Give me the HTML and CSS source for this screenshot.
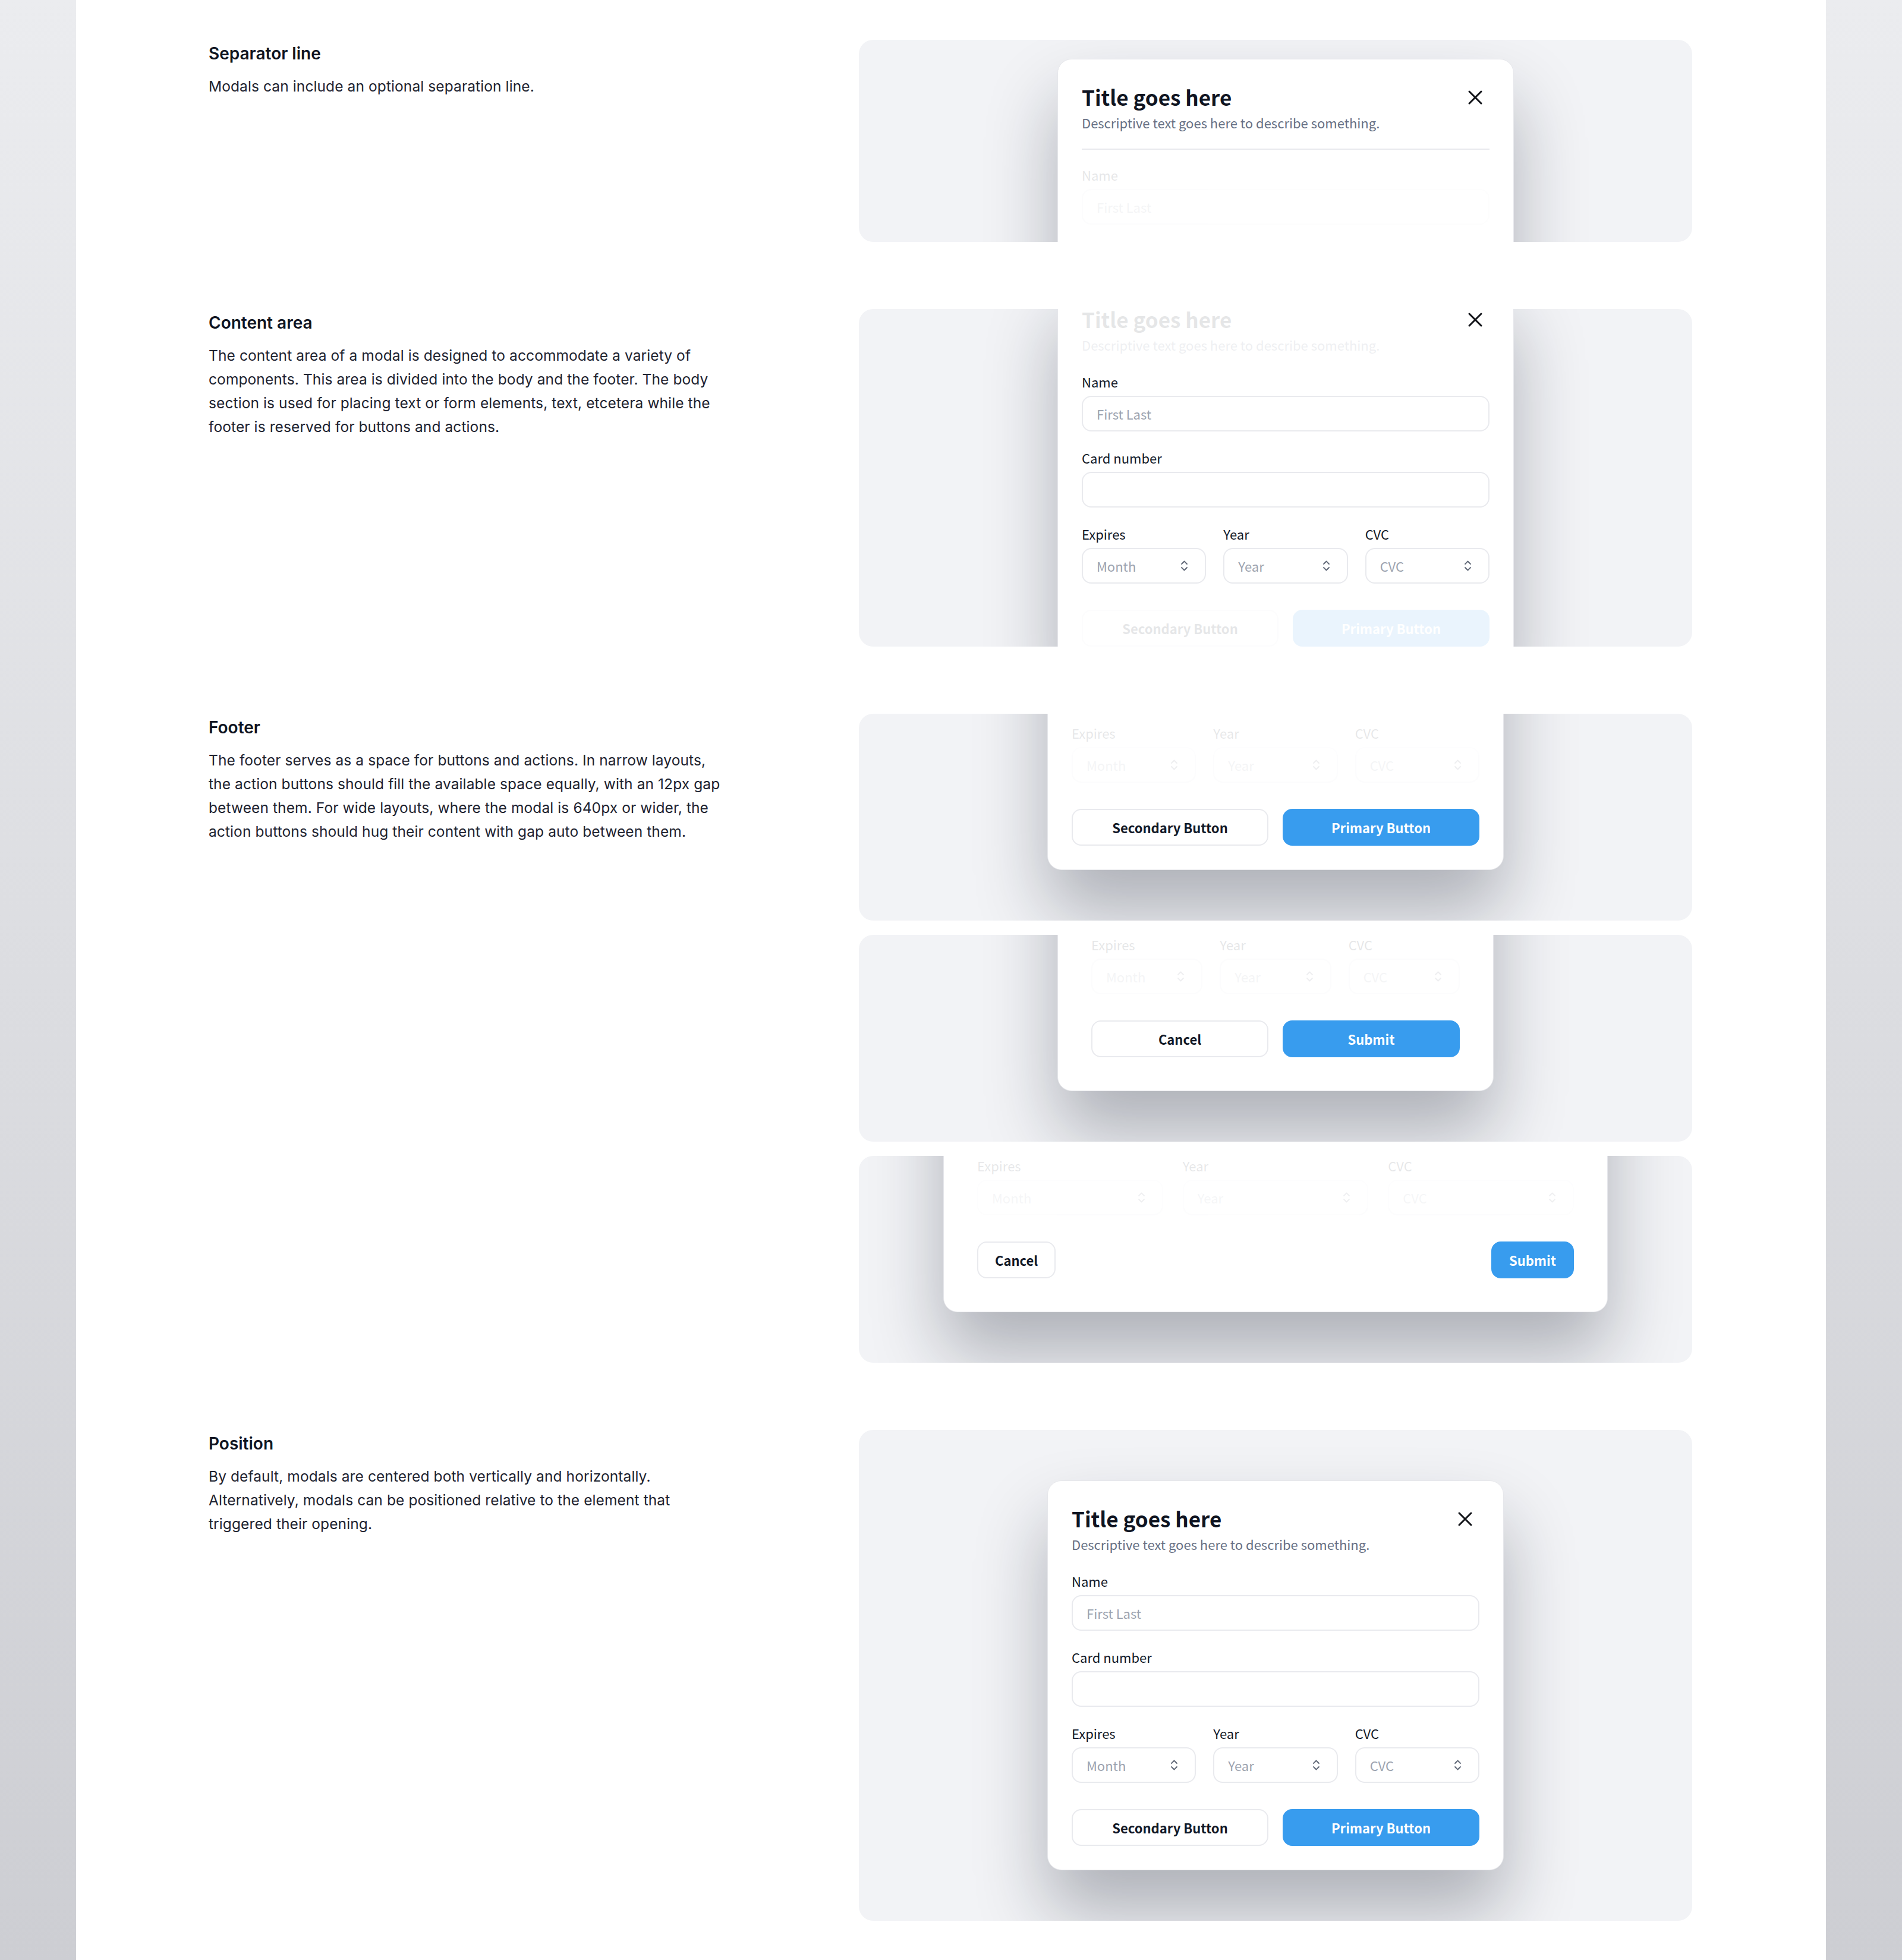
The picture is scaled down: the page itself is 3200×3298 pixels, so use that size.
FILE: index.html
```html
<!DOCTYPE html>
<html>
<head>
<meta charset="utf-8">
<title>Modal</title>
<link rel="stylesheet" href="styles.css">
</head>
<body>

<div class="page">

	<!-- separator line -->
	<div class="section">
		<div class="section-text">
			<h2>Separator line</h2>
			<p>Modals can include an optional separation line.</p>
		</div>
		<div class="demos">
			<div class="demo demo-top">
				<div class="modal modal-shift">
					<div class="modal-head">
						<h3 class="modal-title">Title goes here</h3>
						<p class="modal-desc">Descriptive text goes here to describe something.</p>
					</div>
					<button class="modal-close" type="button"><svg width="48" height="48" viewBox="0 0 48 48"><path d="M14 14L34 34M34 14L14 34" /></svg></button>
					<hr class="modal-sep">
					<div class="modal-body dim">
						<div class="field">
							<span class="field-label">Name</span>
							<div class="input">First Last</div>
						</div>
						<div class="field">
							<span class="field-label">Card number</span>
							<div class="input"></div>
						</div>
						<div class="field-row">
							<div class="field">
								<span class="field-label">Expires</span>
								<div class="input select">Month<svg width="13" height="22" viewBox="0 0 13 22"><path d="M2 8L6.5 3.5L11 8M2 14L6.5 18.5L11 14" /></svg></div>
							</div>
							<div class="field">
								<span class="field-label">Year</span>
								<div class="input select">Year<svg width="13" height="22" viewBox="0 0 13 22"><path d="M2 8L6.5 3.5L11 8M2 14L6.5 18.5L11 14" /></svg></div>
							</div>
							<div class="field">
								<span class="field-label">CVC</span>
								<div class="input select">CVC<svg width="13" height="22" viewBox="0 0 13 22"><path d="M2 8L6.5 3.5L11 8M2 14L6.5 18.5L11 14" /></svg></div>
							</div>
						</div>
					</div>
					<div class="modal-foot dim">
						<button class="btn" type="button">Secondary Button</button>
						<button class="btn btn-primary" type="button">Primary Button</button>
					</div>
				</div>
			</div>
		</div>
	</div>

	<!-- content area -->
	<div class="section">
		<div class="section-text">
			<h2>Content area</h2>
			<p>The content area of a modal is designed to accommodate a variety of components. This area is divided into the body and the footer. The body section is used for placing text or form elements, text, etcetera while the footer is reserved for buttons and actions.</p>
		</div>
		<div class="demos">
			<div class="demo demo-body">
				<div class="modal modal-shift">
					<div class="modal-head dim">
						<h3 class="modal-title">Title goes here</h3>
						<p class="modal-desc">Descriptive text goes here to describe something.</p>
					</div>
					<button class="modal-close" type="button"><svg width="48" height="48" viewBox="0 0 48 48"><path d="M14 14L34 34M34 14L14 34" /></svg></button>
					<div class="modal-body">
						<div class="field">
							<span class="field-label">Name</span>
							<div class="input">First Last</div>
						</div>
						<div class="field">
							<span class="field-label">Card number</span>
							<div class="input"></div>
						</div>
						<div class="field-row">
							<div class="field">
								<span class="field-label">Expires</span>
								<div class="input select">Month<svg width="13" height="22" viewBox="0 0 13 22"><path d="M2 8L6.5 3.5L11 8M2 14L6.5 18.5L11 14" /></svg></div>
							</div>
							<div class="field">
								<span class="field-label">Year</span>
								<div class="input select">Year<svg width="13" height="22" viewBox="0 0 13 22"><path d="M2 8L6.5 3.5L11 8M2 14L6.5 18.5L11 14" /></svg></div>
							</div>
							<div class="field">
								<span class="field-label">CVC</span>
								<div class="input select">CVC<svg width="13" height="22" viewBox="0 0 13 22"><path d="M2 8L6.5 3.5L11 8M2 14L6.5 18.5L11 14" /></svg></div>
							</div>
						</div>
					</div>
					<div class="modal-foot dim">
						<button class="btn" type="button">Secondary Button</button>
						<button class="btn btn-primary" type="button">Primary Button</button>
					</div>
				</div>
			</div>
		</div>
	</div>

	<!-- footer -->
	<div class="section">
		<div class="section-text">
			<h2>Footer</h2>
			<p>The footer serves as a space for buttons and actions. In narrow layouts, the action buttons should fill the available space equally, with an 12px gap between them. For wide layouts, where the modal is 640px or wider, the action buttons should hug their content with gap auto between them.</p>
		</div>
		<div class="demos">
			<div class="demo demo-foot">
				<div class="modal">
					<div class="modal-head dim">
						<h3 class="modal-title">Title goes here</h3>
						<p class="modal-desc">Descriptive text goes here to describe something.</p>
					</div>
					<div class="modal-body dim">
						<div class="field">
							<span class="field-label">Name</span>
							<div class="input">First Last</div>
						</div>
						<div class="field">
							<span class="field-label">Card number</span>
							<div class="input"></div>
						</div>
						<div class="field-row">
							<div class="field">
								<span class="field-label">Expires</span>
								<div class="input select">Month<svg width="13" height="22" viewBox="0 0 13 22"><path d="M2 8L6.5 3.5L11 8M2 14L6.5 18.5L11 14" /></svg></div>
							</div>
							<div class="field">
								<span class="field-label">Year</span>
								<div class="input select">Year<svg width="13" height="22" viewBox="0 0 13 22"><path d="M2 8L6.5 3.5L11 8M2 14L6.5 18.5L11 14" /></svg></div>
							</div>
							<div class="field">
								<span class="field-label">CVC</span>
								<div class="input select">CVC<svg width="13" height="22" viewBox="0 0 13 22"><path d="M2 8L6.5 3.5L11 8M2 14L6.5 18.5L11 14" /></svg></div>
							</div>
						</div>
					</div>
					<div class="modal-foot">
						<button class="btn" type="button">Secondary Button</button>
						<button class="btn btn-primary" type="button">Primary Button</button>
					</div>
				</div>
			</div>

			<div class="demo demo-foot">
				<div class="modal modal-mid">
					<div class="modal-body dim">
						<div class="field">
							<span class="field-label">Name</span>
							<div class="input">First Last</div>
						</div>
						<div class="field-row">
							<div class="field">
								<span class="field-label">Expires</span>
								<div class="input select">Month<svg width="13" height="22" viewBox="0 0 13 22"><path d="M2 8L6.5 3.5L11 8M2 14L6.5 18.5L11 14" /></svg></div>
							</div>
							<div class="field">
								<span class="field-label">Year</span>
								<div class="input select">Year<svg width="13" height="22" viewBox="0 0 13 22"><path d="M2 8L6.5 3.5L11 8M2 14L6.5 18.5L11 14" /></svg></div>
							</div>
							<div class="field">
								<span class="field-label">CVC</span>
								<div class="input select">CVC<svg width="13" height="22" viewBox="0 0 13 22"><path d="M2 8L6.5 3.5L11 8M2 14L6.5 18.5L11 14" /></svg></div>
							</div>
						</div>
					</div>
					<div class="modal-foot">
						<button class="btn" type="button">Cancel</button>
						<button class="btn btn-primary" type="button">Submit</button>
					</div>
				</div>
			</div>

			<div class="demo demo-foot">
				<div class="modal modal-wide">
					<div class="modal-body dim">
						<div class="field">
							<span class="field-label">Name</span>
							<div class="input">First Last</div>
						</div>
						<div class="field-row">
							<div class="field">
								<span class="field-label">Expires</span>
								<div class="input select">Month<svg width="13" height="22" viewBox="0 0 13 22"><path d="M2 8L6.5 3.5L11 8M2 14L6.5 18.5L11 14" /></svg></div>
							</div>
							<div class="field">
								<span class="field-label">Year</span>
								<div class="input select">Year<svg width="13" height="22" viewBox="0 0 13 22"><path d="M2 8L6.5 3.5L11 8M2 14L6.5 18.5L11 14" /></svg></div>
							</div>
							<div class="field">
								<span class="field-label">CVC</span>
								<div class="input select">CVC<svg width="13" height="22" viewBox="0 0 13 22"><path d="M2 8L6.5 3.5L11 8M2 14L6.5 18.5L11 14" /></svg></div>
							</div>
						</div>
					</div>
					<div class="modal-foot">
						<button class="btn" type="button">Cancel</button>
						<button class="btn btn-primary" type="button">Submit</button>
					</div>
				</div>
			</div>
		</div>
	</div>

	<!-- position -->
	<div class="section">
		<div class="section-text">
			<h2>Position</h2>
			<p>By default, modals are centered both vertically and horizontally. Alternatively, modals can be positioned relative to the element that triggered their opening.</p>
		</div>
		<div class="demos">
			<div class="demo demo-center">
				<div class="modal">
					<div class="modal-head">
						<h3 class="modal-title">Title goes here</h3>
						<p class="modal-desc">Descriptive text goes here to describe something.</p>
					</div>
					<button class="modal-close" type="button"><svg width="48" height="48" viewBox="0 0 48 48"><path d="M14 14L34 34M34 14L14 34" /></svg></button>
					<div class="modal-body">
						<div class="field">
							<span class="field-label">Name</span>
							<div class="input">First Last</div>
						</div>
						<div class="field">
							<span class="field-label">Card number</span>
							<div class="input"></div>
						</div>
						<div class="field-row">
							<div class="field">
								<span class="field-label">Expires</span>
								<div class="input select">Month<svg width="13" height="22" viewBox="0 0 13 22"><path d="M2 8L6.5 3.5L11 8M2 14L6.5 18.5L11 14" /></svg></div>
							</div>
							<div class="field">
								<span class="field-label">Year</span>
								<div class="input select">Year<svg width="13" height="22" viewBox="0 0 13 22"><path d="M2 8L6.5 3.5L11 8M2 14L6.5 18.5L11 14" /></svg></div>
							</div>
							<div class="field">
								<span class="field-label">CVC</span>
								<div class="input select">CVC<svg width="13" height="22" viewBox="0 0 13 22"><path d="M2 8L6.5 3.5L11 8M2 14L6.5 18.5L11 14" /></svg></div>
							</div>
						</div>
					</div>
					<div class="modal-foot">
						<button class="btn" type="button">Secondary Button</button>
						<button class="btn btn-primary" type="button">Primary Button</button>
					</div>
				</div>
			</div>
		</div>
	</div>

</div>

</body>
</html>
```

FILE: styles.css
```css
* {
	box-sizing: border-box;
}

body {
	margin: 0;
	padding: 0;
	background: linear-gradient(#ebecef, #cdced3);
	font-family: Inter, "Noto Sans", sans-serif;
}

.page {
	margin: 0 128px;
	min-height: 100vh;
	background: #fff;
	padding: 67px 225px 66px 223px;
	display: flex;
	flex-direction: column;
	gap: 113px;
}

.section {
	display: grid;
	grid-template-columns: 1094px 1402px;
}

.section-text {
	padding-top: 5px;
}

.section-text h2 {
	margin: 0 0 17px;
	font-size: 28px;
	line-height: 36px;
	font-weight: 600;
	color: #0f1421;
}

.section-text p {
	margin: 0;
	max-width: 868px;
	font-size: 24.5px;
	line-height: 40px;
	letter-spacing: 0.1px;
	color: #1e2330;
}

/* demo panels */

.demos {
	display: flex;
	flex-direction: column;
	gap: 24px;
}

.demo {
	background: #f2f3f6;
	border-radius: 24px;
	overflow: hidden;
	display: flex;
	flex-direction: column;
	align-items: center;
}

.demo-top {
	height: 340px;
	padding-top: 32px;
}

.demo-body {
	height: 568px;
}

.demo-body .modal {
	margin-top: -47px;
}

.demo-foot {
	height: 348px;
	justify-content: flex-end;
	padding-bottom: 85px;
}

.demo-center {
	height: 826px;
	justify-content: center;
}

.dim {
	opacity: 0.1;
}

/* modal */

.modal {
	position: relative;
	flex-shrink: 0;
	width: 768px;
	padding: 40px;
	background: #fff;
	border: 1px solid #e6e7eb;
	border-radius: 24px;
	box-shadow: 0 70px 120px rgba(17, 24, 39, 0.3);
	font-family: "Noto Sans CJK SC", "Noto Sans", sans-serif;
}

.modal-shift {
	margin-left: 34px;
}

.modal-mid {
	width: 734px;
	padding: 56px;
}

.modal-wide {
	width: 1118px;
	padding: 56px;
}

.modal-title {
	margin: 0;
	font-size: 35px;
	line-height: 46px;
	font-weight: 700;
	color: #0f1421;
}

.modal-desc {
	margin: 4px 0 0;
	font-size: 22px;
	line-height: 32px;
	color: #677084;
}

.modal-close {
	position: absolute;
	top: 40px;
	right: 40px;
	width: 48px;
	height: 48px;
	padding: 0;
	border: 0;
	background: none;
	display: flex;
	align-items: center;
	justify-content: center;
}

.modal-close svg path {
	fill: none;
	stroke: #111318;
	stroke-width: 3;
	stroke-linecap: round;
}

.modal-sep {
	margin: 28px 0 0;
	border: 0;
	border-top: 2px solid #e8e9ed;
}

.modal-body {
	margin-top: 30px;
	display: flex;
	flex-direction: column;
	gap: 28px;
}

.modal-sep + .modal-body {
	margin-top: 26px;
}

.field {
	display: flex;
	flex-direction: column;
	gap: 8px;
	min-width: 0;
}

.field-label {
	font-size: 22px;
	line-height: 32px;
	font-weight: 400;
	color: #111827;
}

.input {
	height: 60px;
	padding: 0 28px 0 23px;
	border: 2px solid #e9eaee;
	border-radius: 16px;
	display: flex;
	align-items: center;
	font-size: 22px;
	color: #9ca3af;
}

.select {
	justify-content: space-between;
}

.select svg path {
	fill: none;
	stroke: #5f6776;
	stroke-width: 1.8;
	stroke-linecap: round;
	stroke-linejoin: round;
}

.field-row {
	display: grid;
	grid-template-columns: repeat(3, 1fr);
	gap: 29px;
}

.modal-wide .field-row {
	gap: 33px;
}

.modal-foot {
	margin-top: 44px;
	display: flex;
	gap: 24px;
}

.btn {
	flex: 1;
	height: 62px;
	padding: 0;
	border: 2px solid #e9eaee;
	border-radius: 16px;
	background: #fff;
	font-family: "Noto Sans CJK SC", "Noto Sans", sans-serif;
	font-size: 22px;
	font-weight: 700;
	color: #111827;
}

.btn-primary {
	background: #389cee;
	border-color: #389cee;
	color: #fff;
}

.modal-wide .modal-foot {
	justify-content: space-between;
}

.modal-wide .btn {
	flex: none;
	padding: 0 28px;
}
```
